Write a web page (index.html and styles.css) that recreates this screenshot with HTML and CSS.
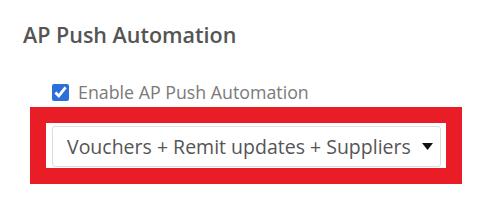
FILE: index.html
```html
<!DOCTYPE html>
<html lang="en">
<head>
    <meta charset="UTF-8">
    <title>AP Push Automation</title>
    <link rel="stylesheet" href="styles.css">
</head>
<body>

<div class="section">
    <h2>AP Push Automation</h2>

    <label class="option">
        <input type="checkbox" checked>
        <span>Enable AP Push Automation</span>
    </label>

    <!-- highlighted dropdown -->
    <div class="highlight">
        <div class="dropdown">
            <span class="value">Vouchers + Remit updates + Suppliers</span>
            <svg class="caret" width="11" height="7" viewBox="0 0 11 7"><path d="M0 0 H11 L5.5 7 Z" fill="#111"/></svg>
        </div>
    </div>
</div>

</body>
</html>
```

FILE: styles.css
```css
* {
    box-sizing: border-box;
}
body {
    margin: 0;
    background: #fff;
    font-family: "Open Sans", Arial, sans-serif;
}
.section {
    padding: 20px 0 0 23px;
}
h2 {
    margin: 0;
    font-size: 21.5px;
    font-weight: 600;
    line-height: 30px;
    color: #555;
}
.option {
    display: flex;
    align-items: center;
    gap: 9px;
    margin: 31px 0 0 29px;
    font-size: 17.8px;
    color: #7a7a7a;
    line-height: 22px;
}
.option input {
    width: 17px;
    height: 17px;
    margin: 0;
    accent-color: #2a6fdb;
}
.highlight {
    width: 432px;
    margin: 4px 0 0 7px;
    border: 16px solid #e81d25;
    padding: 3px 5px 1px 6px;
    background: #fff;
}
.dropdown {
    display: flex;
    align-items: center;
    justify-content: space-between;
    height: 41px;
    padding: 0 7px 0 14px;
    border: 1px solid #ddd;
    border-radius: 3px;
    font-size: 19.5px;
    color: #555;
}
```
